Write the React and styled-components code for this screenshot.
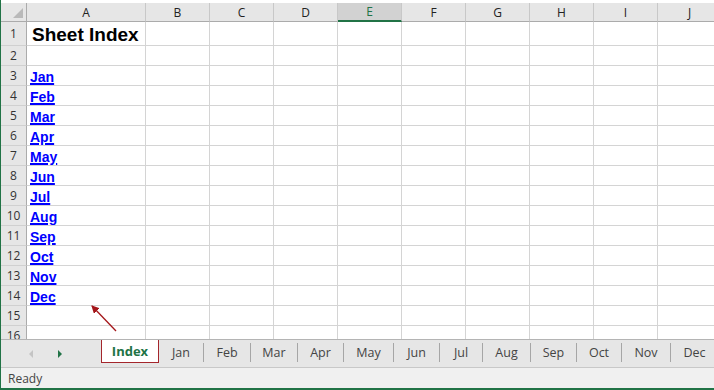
import React from 'react';
import styled, { createGlobalStyle } from 'styled-components';

const GlobalStyle = createGlobalStyle`
  html, body {
    margin: 0;
    padding: 0;
    background: #fff;
  }
  * { box-sizing: border-box; }
`;

const COLUMNS = ['A', 'B', 'C', 'D', 'E', 'F', 'G', 'H', 'I', 'J'];
const MONTHS = ['Jan', 'Feb', 'Mar', 'Apr', 'May', 'Jun', 'Jul', 'Aug', 'Sep', 'Oct', 'Nov', 'Dec'];
const TAB_WIDTHS = [45, 47, 47, 46, 50, 46, 43, 48, 46, 45, 49, 48];
const ACTIVE_COL = 'E';

const Window = styled.div`
  position: relative;
  width: 714px;
  height: 390px;
  overflow: hidden;
  display: flex;
  flex-direction: column;
  border-left: 1px solid #217346;
  border-bottom: 2px solid #217346;
  padding-top: 3px;
  background: #fff;
  font-family: "Open Sans", "Noto Sans", sans-serif;
`;

const Sheet = styled.div`
  flex: 0 0 336px;
  overflow: hidden;
  display: grid;
  grid-template-columns: 26px 119px repeat(9, 64px);
  grid-template-rows: 19px 24px repeat(15, 20px);
`;

const Corner = styled.div`
  position: relative;
  background: #e6e6e6;
  border-right: 1px solid #ababab;
  border-bottom: 1px solid #ababab;
  &::after {
    content: '';
    position: absolute;
    right: 3px;
    bottom: 3px;
    width: 0;
    height: 0;
    border-left: 10px solid transparent;
    border-bottom: 10px solid #b9b9b9;
  }
`;

const ColHead = styled.div`
  display: flex;
  align-items: center;
  justify-content: center;
  font-size: 12px;
  color: ${p => (p.$active ? '#217346' : '#222')};
  background: ${p => (p.$active ? '#d2d2d2' : '#e6e6e6')};
  border-right: 1px solid #c8c8c8;
  border-bottom: ${p => (p.$active ? '2px solid #217346' : '1px solid #ababab')};
`;

const RowHead = styled.div`
  display: flex;
  align-items: center;
  justify-content: center;
  font-size: 12px;
  color: #333;
  background: #e6e6e6;
  border-right: 1px solid #ababab;
  border-bottom: 1px solid #d0d0d0;
`;

const Cell = styled.div`
  display: flex;
  align-items: flex-end;
  overflow: visible;
  white-space: nowrap;
  border-right: 1px solid #d4d4d4;
  border-bottom: 1px solid #d4d4d4;
  font-family: "Liberation Sans", Arial, sans-serif;
`;

const Title = styled.span`
  font-size: 19px;
  font-weight: bold;
  color: #000;
  padding: 0 0 0 5px;
  line-height: 21px;
`;

const SheetLink = styled.a`
  font-size: 14px;
  font-weight: bold;
  color: #0000ff;
  text-decoration: underline;
  text-decoration-thickness: 2px;
  text-underline-offset: 1px;
  padding: 0 0 0 3px;
  line-height: 15px;
  cursor: pointer;
`;

const TabBar = styled.div`
  flex: 0 0 28px;
  display: flex;
  align-items: flex-start;
  background: #e6e6e6;
  border-top: 1px solid #b4b4b4;
  white-space: nowrap;
  overflow: hidden;
`;

const Nav = styled.div`
  flex: 0 0 100px;
  height: 27px;
  display: flex;
  align-items: center;
  padding-left: 28px;
  gap: 25px;
`;

const NavArrow = styled.span`
  width: 0;
  height: 0;
  border-top: 4px solid transparent;
  border-bottom: 4px solid transparent;
  ${p => (p.$dir === 'left'
    ? `border-right: 4px solid ${p.$enabled ? '#217346' : '#c4c4c4'};`
    : `border-left: 4px solid ${p.$enabled ? '#217346' : '#c4c4c4'};`)}
`;

const ActiveTab = styled.div`
  flex: 0 0 58px;
  height: 24px;
  margin-top: -1px;
  display: flex;
  align-items: center;
  justify-content: center;
  background: #fff;
  border: 1px solid #a4262c;
  color: #217346;
  font-weight: bold;
  font-size: 13px;
`;

const Tab = styled.div`
  flex: 0 0 ${p => p.$w}px;
  height: 19px;
  margin-top: 3px;
  display: flex;
  align-items: center;
  justify-content: center;
  border-right: 1px solid #a6a6a6;
  color: #444;
  font-size: 12.5px;
`;

const StatusBar = styled.div`
  flex: 1;
  display: flex;
  align-items: center;
  padding-left: 7px;
  background: #f0f0f0;
  border-top: 1px solid #c8c8c8;
  color: #444;
  font-size: 12px;
`;

const Annotation = styled.svg`
  position: absolute;
  left: 0;
  top: 0;
  pointer-events: none;
`;

function renderRow(r) {
  const cells = [<RowHead key="h">{r}</RowHead>];
  COLUMNS.forEach((c, i) => {
    let content = null;
    if (i === 0 && r === 1) content = <Title>Sheet Index</Title>;
    if (i === 0 && r >= 3 && r <= 14) content = <SheetLink>{MONTHS[r - 3]}</SheetLink>;
    cells.push(<Cell key={c}>{content}</Cell>);
  });
  return cells;
}

export default function App() {
  const rows = Array.from({ length: 16 }, (_, i) => i + 1);
  return (
    <>
      <GlobalStyle />
      <Window>
        <Sheet>
          <Corner />
          {COLUMNS.map(c => <ColHead key={c} $active={c === ACTIVE_COL}>{c}</ColHead>)}
          {rows.map(renderRow)}
        </Sheet>
        <TabBar>
          <Nav>
            <NavArrow $dir="left" />
            <NavArrow $dir="right" $enabled />
          </Nav>
          <ActiveTab>Index</ActiveTab>
          {MONTHS.map((m, i) => <Tab key={m} $w={TAB_WIDTHS[i]}>{m}</Tab>)}
        </TabBar>
        <StatusBar>Ready</StatusBar>
        <Annotation width="714" height="390">
          <defs>
            <marker id="head" markerWidth="8" markerHeight="8" refX="7" refY="4" orient="auto" markerUnits="userSpaceOnUse">
              <path d="M0,0 L8,4 L0,8 z" fill="#a4161a" />
            </marker>
          </defs>
          <line x1="115" y1="331" x2="91" y2="306" stroke="#a4161a" strokeWidth="1.3" markerEnd="url(#head)" />
        </Annotation>
      </Window>
    </>
  );
}
